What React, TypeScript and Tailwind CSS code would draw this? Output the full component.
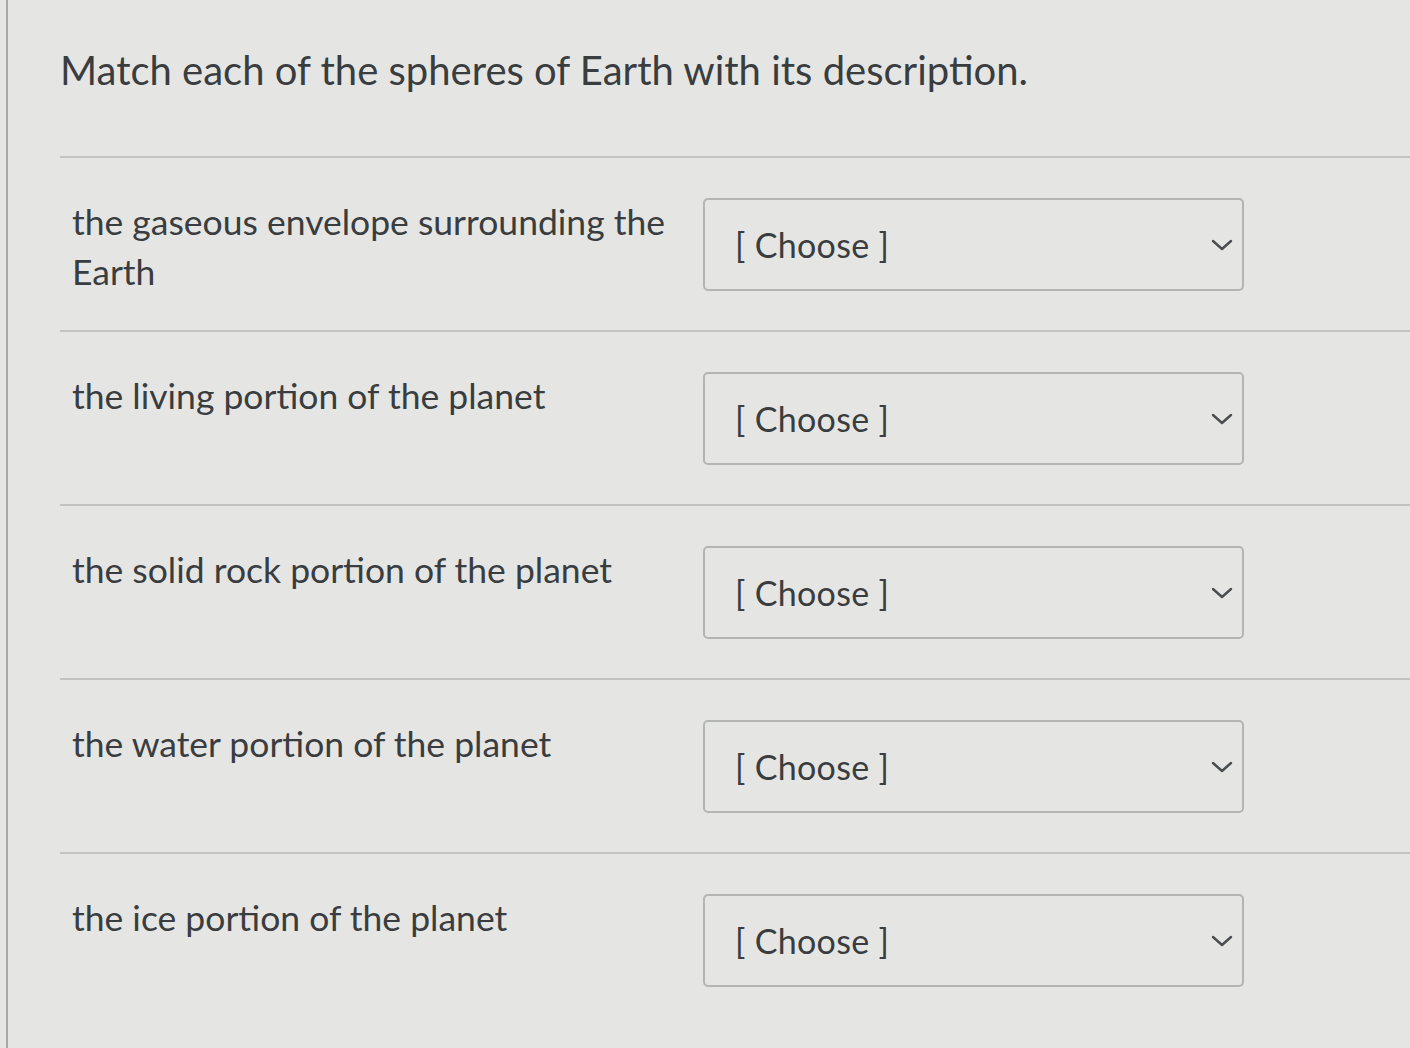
import React from "react";

const rows = [
  "the gaseous envelope surrounding the Earth",
  "the living portion of the planet",
  "the solid rock portion of the planet",
  "the water portion of the planet",
  "the ice portion of the planet",
];

function ChooseSelect() {
  return (
    <div className="w-[541px] h-[93px] shrink-0 rounded-[5px] border-2 border-[#b3b5b4] flex items-center justify-between pl-[30px] pr-[6px]">
      <span className="text-[34px] text-[#3a3d3f] leading-none tracking-[0.3px]">[ Choose ]</span>
      <svg width="24" height="14" viewBox="0 0 24 14" fill="none" className="mr-[2px]">
        <path d="M3 3 L12 11 L21 3" stroke="#4a4d4f" strokeWidth="2.4" strokeLinecap="round" strokeLinejoin="round" />
      </svg>
    </div>
  );
}

export default function App() {
  return (
    <div
      className="min-h-[1048px] w-[1410px] bg-[#e5e6e4] flex"
      style={{ fontFamily: "Lato, 'Open Sans', sans-serif" }}
    >
      <div className="w-[6px] shrink-0" />
      <div className="w-[2px] shrink-0 bg-[#a7a9a8]" />
      <div className="flex-1 pl-[52px]">
        <h1 className="text-[40px] text-[#3a3d3f] pt-[40px] leading-[60px] pb-[56px]">
          Match each of the spheres of Earth with its description.
        </h1>
        {rows.map((text) => (
          <div key={text} className="border-t-2 border-[#c2c4c3] flex pt-[40px] pb-[40px] h-[174px]">
            <div className="w-[643px] shrink-0 pl-[12px] pr-[8px] text-[35.5px] leading-[50px] text-[#3a3d3f] -mt-[1px]">
              {text}
            </div>
            <ChooseSelect />
          </div>
        ))}
      </div>
    </div>
  );
}
